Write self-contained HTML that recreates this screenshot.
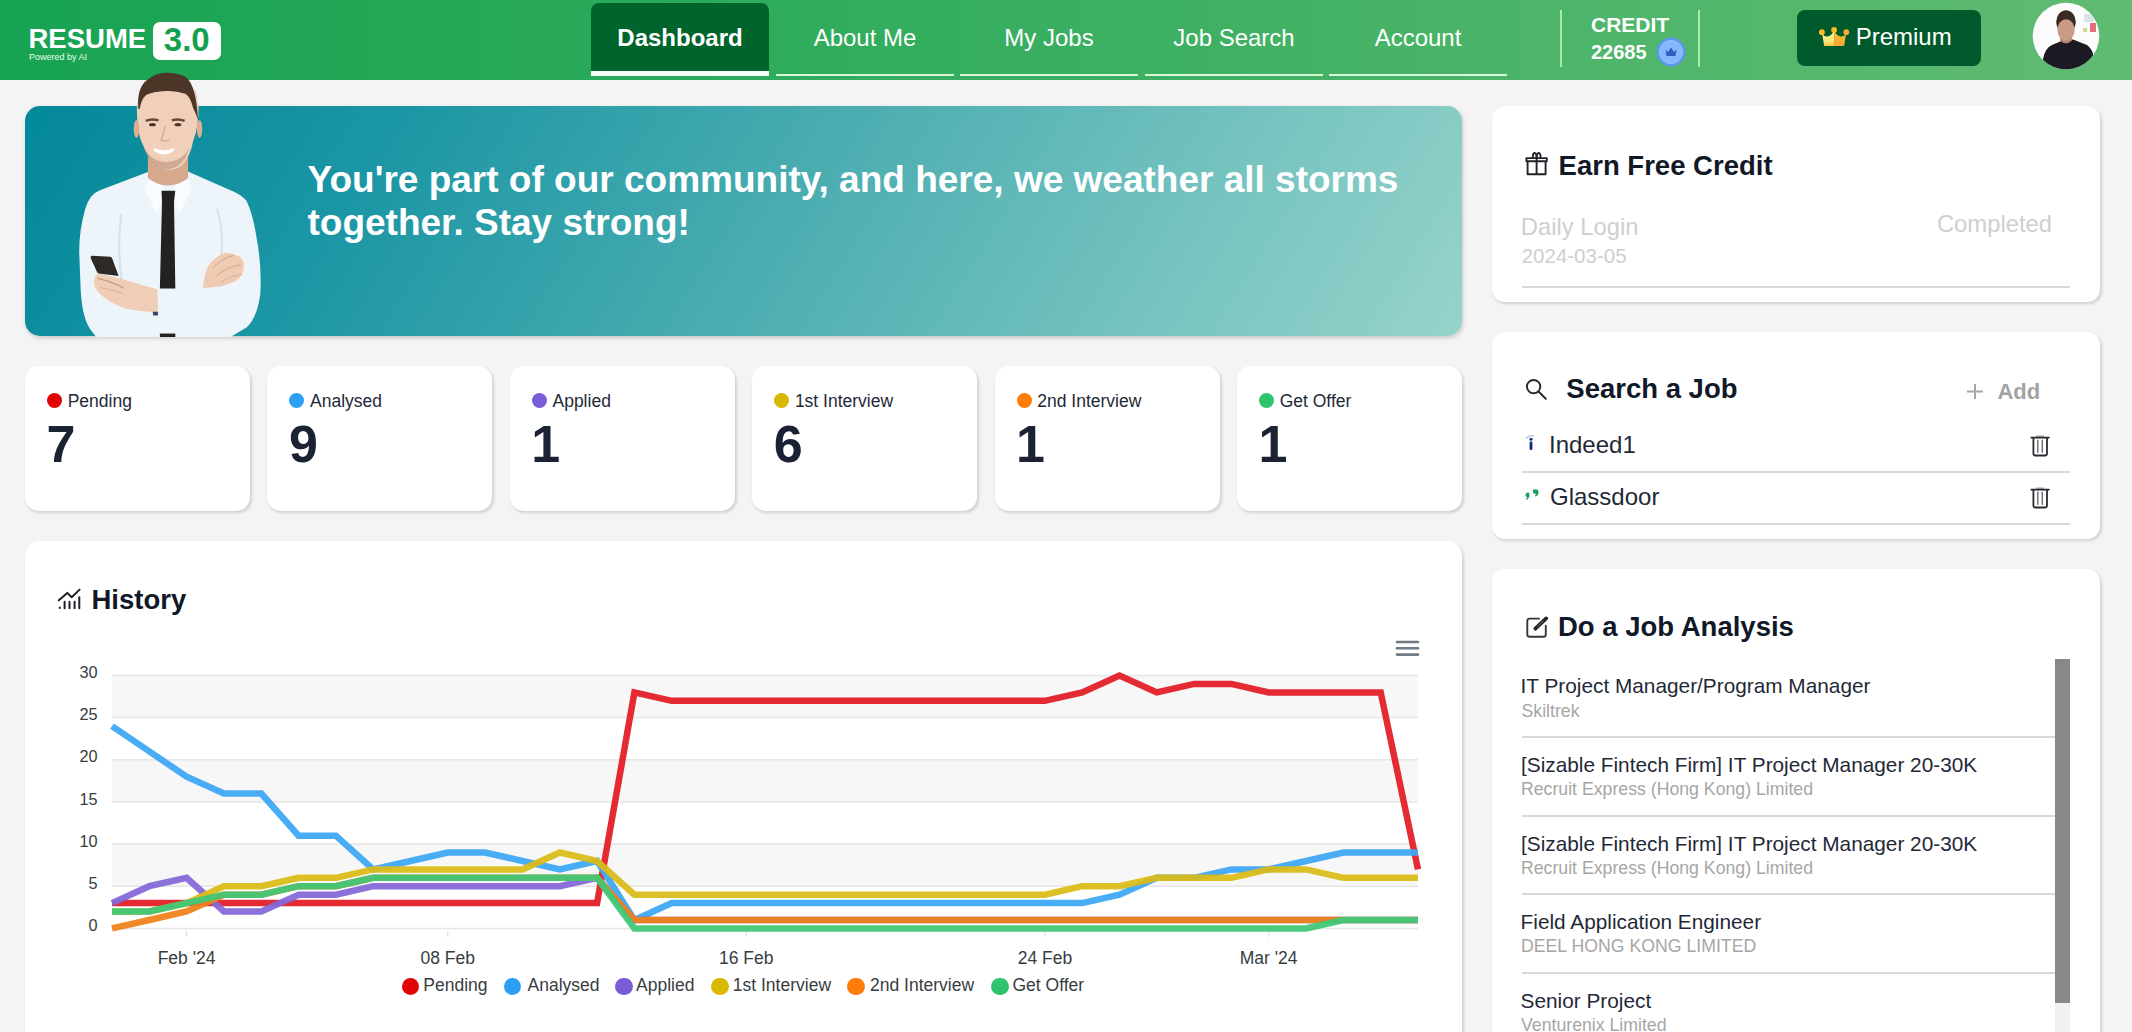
<!DOCTYPE html>
<html><head><meta charset="utf-8">
<style>
*{margin:0;padding:0;box-sizing:border-box}
html,body{width:2132px;height:1032px;overflow:hidden}
body{position:relative;background:#f4f4f4;font-family:"Liberation Sans",sans-serif;color:#1f2937}
.a{position:absolute;white-space:nowrap;line-height:1}
#hdr{position:absolute;left:0;top:0;width:2132px;height:80px;background:linear-gradient(90deg,#17a352 0%,#2eab5c 35%,#4ab468 70%,#60bb72 100%)}
.tab{position:absolute;top:3px;width:178px;height:71px;color:#fff;font-size:24px;text-align:center}
.tab span{position:absolute;left:0;right:0;top:25.7px;line-height:1}
.uline{position:absolute;top:74px;width:178px;height:2px;background:#d8f6d8}
.card{position:absolute;background:#fff;border-radius:15px;box-shadow:1.5px 2px 3px rgba(0,0,0,.14)}
.scard{top:366px;width:225px;height:145px;border-radius:14px}
.dot{position:absolute;width:15px;height:15px;border-radius:50%;left:22px;top:26.6px}
.slab{position:absolute;left:42.7px;top:27px;font-size:17.5px;line-height:1;color:#1f2937;white-space:nowrap}
.snum{position:absolute;left:21.5px;top:52px;font-size:52px;font-weight:bold;line-height:1;color:#1a2233}
.ttl{font-size:27.5px;font-weight:bold;color:#111827}
.jt{font-size:20.8px;color:#1f2937;margin-top:0.8px}
.js{font-size:17.7px;color:#a6a6a6;margin-top:1.2px}
.sep{position:absolute;height:2px;background:#d9d9d9}
svg.chart{position:absolute;left:0;top:0;font-family:"Liberation Sans",sans-serif}
</style></head><body>
<div id="hdr"></div>
<div class="a" style="left:28.5px;top:25.4px;font-size:27.5px;font-weight:bold;color:#fff">RESUME</div>
<div class="a" style="left:29px;top:52.6px;font-size:9px;color:#e8ffe8">Powered by AI</div>
<div class="a" style="left:153px;top:22px;width:67.5px;height:38px;background:#fff;border-radius:7px"></div>
<div class="a" style="left:163.8px;top:23.3px;font-size:33px;font-weight:bold;color:#13a04e">3.0</div>

<div class="tab" style="left:591px;background:#00652d;border-radius:8px 8px 0 0;height:68px"><span style="font-weight:bold;top:22.7px">Dashboard</span></div>
<div class="a" style="left:591px;top:71px;width:178px;height:5px;background:#f5fff5"></div>
<div class="tab" style="left:776px"><span style="top:22.7px">About Me</span></div>
<div class="uline" style="left:776px"></div>
<div class="tab" style="left:960px"><span style="top:22.7px">My Jobs</span></div>
<div class="uline" style="left:960px"></div>
<div class="tab" style="left:1145px"><span style="top:22.7px">Job Search</span></div>
<div class="uline" style="left:1145px"></div>
<div class="tab" style="left:1329px"><span style="top:22.7px">Account</span></div>
<div class="uline" style="left:1329px"></div>

<div class="a" style="left:1560px;top:10px;width:2px;height:57px;background:#a8eca8"></div>
<div class="a" style="left:1697.5px;top:10px;width:2px;height:57px;background:#a8eca8"></div>
<div class="a" style="left:1591px;top:13.9px;font-size:21px;font-weight:bold;color:#fff">CREDIT</div>
<div class="a" style="left:1591px;top:41.6px;font-size:20px;font-weight:bold;color:#fff">22685</div>
<svg class="a" style="left:1656px;top:37px" width="30" height="30" viewBox="0 0 30 30">
<circle cx="15" cy="15" r="14.5" fill="#5a98f2"/><circle cx="15" cy="15" r="11.5" fill="#86b6fb" stroke="#9cc4ff" stroke-width="1"/>
<path d="M9.5 12.5 L12 15 L15 10.5 L18 15 L20.5 12.5 L19.5 19 L10.5 19 Z" fill="#2d5fc0"/>
</svg>

<div class="a" style="left:1797px;top:10px;width:184px;height:56px;background:#005a2b;border-radius:8px"></div>
<svg class="a" style="left:1818px;top:27px" width="32" height="21" viewBox="0 0 32 21">
<defs><linearGradient id="cr" x1="0" y1="0" x2="0" y2="1"><stop offset="0" stop-color="#fbc02d"/><stop offset="1" stop-color="#f9a63a"/></linearGradient>
<linearGradient id="cl" x1="0" y1="0" x2="0" y2="1"><stop offset="0" stop-color="#f6f59a"/><stop offset=".7" stop-color="#fde377"/><stop offset="1" stop-color="#f9c23c"/></linearGradient></defs>
<circle cx="3.9" cy="5.2" r="2.9" fill="#fbbf24"/><circle cx="16.1" cy="3" r="2.9" fill="#fbb92a"/><circle cx="28.3" cy="5.2" r="2.9" fill="#f9a83a"/>
<path d="M4.2 7.2 Q7 10 10 9.4 Q13.5 8.6 16.1 4.6 L16.1 19 L6.2 19 Z" fill="url(#cl)"/>
<path d="M16.1 4.6 Q18.7 8.6 22.2 9.4 Q25.2 10 28 7.2 L26.1 19 L16.1 19 Z" fill="url(#cr)"/>
</svg>
<div class="a" style="left:1855.7px;top:25.1px;font-size:24px;color:#fff">Premium</div>

<svg class="a" style="left:2032px;top:2px" width="68" height="68" viewBox="0 0 68 68">
<defs><clipPath id="av"><circle cx="34" cy="34" r="33.3"/></clipPath></defs>
<g clip-path="url(#av)">
<rect width="68" height="68" fill="#fcfcfc"/>
<rect x="52" y="12" width="10" height="8" fill="#dde3e6"/>
<rect x="58" y="21" width="6" height="9" fill="#e2707a"/>
<rect x="51" y="26" width="4" height="4" fill="#cfe08a"/>
<path d="M8 68 L11 57 Q13 46 20 43 L30 38.7 L41 37.5 L55 43 Q60 47 61 52 L62 68 Z" fill="#1b1a22"/>
<path d="M28.5 32 L39.5 32 L40 38.5 Q34 44 28 38.5 Z" fill="#b58873"/>
<ellipse cx="34" cy="20" rx="9.8" ry="11.5" fill="#3b2a22"/>
<ellipse cx="34" cy="28" rx="8.6" ry="10.8" fill="#c99a84"/>
<path d="M25 21 Q25 9 34 8.5 Q43 9 43 21 Q41 16 34 16 Q27 16 25 21 Z" fill="#3b2a22"/>
</g></svg>
<div class="a" style="left:25px;top:106px;width:1437px;height:230px;border-radius:15px;background:linear-gradient(122deg,#03889b 0%,#1b96a4 24%,#4daeb1 54%,#77c4c0 80%,#96d3ca 100%);box-shadow:1px 2px 4px rgba(0,0,0,.18)"></div>
<svg class="a" style="left:60px;top:65px" width="220" height="272" viewBox="0 0 826 1021" preserveAspectRatio="none">
<path d="M335 400 L150 470 Q110 485 95 540 Q72 620 72 700 L78 850 Q85 960 120 1000 L136 1021 L640 1021 L700 985 Q740 950 752 860 Q758 760 740 660 Q725 560 700 510 Q680 485 640 470 L480 400 Z" fill="#eef5fa"/>
<path d="M340 405 L318 470 L365 560 L392 470 Z" fill="#f9fcff"/>
<path d="M478 405 L495 470 L445 560 L420 470 Z" fill="#f9fcff"/>
<path d="M230 560 Q210 700 240 860" stroke="#d6e2ec" stroke-width="8" fill="none"/>
<path d="M590 540 Q620 640 600 760" stroke="#d6e2ec" stroke-width="8" fill="none"/>
<path d="M330 344 L330 425 Q405 480 481 425 L481 344 Z" fill="#d7a98c"/>
<path d="M381 472 L433 472 L428 513 L433 839 L375 839 L383 513 Z" fill="#222"/>
<path d="M375 1008 L433 1008 L433 1021 L375 1021 Z" fill="#222"/>
<path d="M300 95 L289 150 Q287 250 309 295 Q340 375 387 393 Q430 400 461 374 Q490 340 500 285 Q522 230 520 150 L510 95 Z" fill="#f1d0bb"/>
<ellipse cx="287" cy="240" rx="10" ry="34" fill="#dfae90"/>
<ellipse cx="524" cy="240" rx="10" ry="34" fill="#dfae90"/>
<path d="M312 300 Q330 370 387 393 Q440 395 470 350 Q485 320 492 295 Q470 360 400 365 Q335 360 312 300 Z" fill="#b58a72" opacity=".55"/>
<path d="M348 312 Q390 328 432 312 Q425 334 390 336 Q356 334 348 312 Z" fill="#fff"/>
<path d="M322 210 Q345 200 370 208" stroke="#6a4634" stroke-width="9" fill="none"/>
<path d="M420 208 Q445 200 468 210" stroke="#6a4634" stroke-width="9" fill="none"/>
<ellipse cx="347" cy="224" rx="13" ry="6" fill="#4a3428"/>
<ellipse cx="443" cy="224" rx="13" ry="6" fill="#4a3428"/>
<path d="M395 230 Q385 270 380 282 Q395 290 412 282" stroke="#d9a68a" stroke-width="5" fill="none"/>
<path d="M294 165 Q288 90 323 59 Q360 28 397 29 Q445 30 471 44 Q512 75 518 206 Q510 180 500 162 Q490 120 471 108 Q430 95 397 98 Q350 100 323 113 Q305 130 299 165 Z" fill="#4d3527"/>
<path d="M127 815 Q128 785 150 783 L240 805 Q320 830 366 842 L368 928 Q300 925 243 914 Q180 890 150 860 Q128 840 127 815 Z" fill="#efcdb6"/>
<path d="M140 800 Q200 815 240 838" stroke="#c99a80" stroke-width="4" fill="none"/>
<path d="M150 835 Q200 845 240 858" stroke="#d5ab92" stroke-width="3" fill="none"/>
<path d="M348 926 L368 926 L368 940 L350 940 Z" fill="#3b4c6a"/>
<path d="M121 716 L189 720 Q194 721 196 726 L220 792 L146 783 Q141 782 139 777 L115 724 Q114 716 121 716 Z" fill="#2e2826"/>
<path d="M537 837 Q540 780 561 747 Q590 715 621 705 Q650 705 675 720 Q692 735 690 753 Q690 775 684 786 Q670 805 657 813 Q630 825 603 831 Z" fill="#efcbb3"/>
<path d="M575 760 Q610 725 650 715" stroke="#cf9f86" stroke-width="3.5" fill="none"/>
<path d="M590 790 Q630 755 680 750" stroke="#cf9f86" stroke-width="3.5" fill="none"/>
<path d="M605 815 Q640 790 682 785" stroke="#d5a890" stroke-width="3" fill="none"/>
</svg>
<div class="a" style="left:307.5px;top:160.9px;font-size:37px;font-weight:bold;color:#fff">You're part of our community, and here, we weather all storms</div>
<div class="a" style="left:307.5px;top:203.8px;font-size:37px;font-weight:bold;color:#fff">together. Stay strong!</div>

<div class="card scard" style="left:25px"><div class="dot" style="background:#e00404"></div><div class="slab">Pending</div><div class="snum">7</div></div>
<div class="card scard" style="left:267.4px"><div class="dot" style="background:#2c9ff5"></div><div class="slab">Analysed</div><div class="snum">9</div></div>
<div class="card scard" style="left:509.8px"><div class="dot" style="background:#7a5dd6"></div><div class="slab">Applied</div><div class="snum">1</div></div>
<div class="card scard" style="left:752.2px"><div class="dot" style="background:#d8b800"></div><div class="slab">1st Interview</div><div class="snum">6</div></div>
<div class="card scard" style="left:994.6px"><div class="dot" style="background:#ff7c0a"></div><div class="slab">2nd Interview</div><div class="snum">1</div></div>
<div class="card scard" style="left:1237px"><div class="dot" style="background:#2ec46e"></div><div class="slab">Get Offer</div><div class="snum">1</div></div>
<div class="card" style="left:25px;top:541px;width:1437px;height:520px"></div>
<svg class="a" style="left:57px;top:587px" width="25" height="23" viewBox="0 0 25 23" fill="none" stroke="#1f1f26" stroke-width="2" stroke-linecap="round" stroke-linejoin="round">
<path d="M1.8 13.3 L10.3 5.9 L14.7 10.3 L22.6 2.6"/>
<path d="M2.8 20.6 L2.8 20.9"/><path d="M7.6 14.8 L7.6 21.2"/><path d="M12.5 14.8 L12.5 21.2"/><path d="M17.6 14.8 L17.6 21.2"/><path d="M22.3 10.2 L22.3 21.2"/>
</svg>
<div class="a ttl" style="left:91.5px;top:585.7px">History</div>
<svg class="a" style="left:1394px;top:639px" width="26" height="18" viewBox="0 0 26 18" stroke="#6e7b87" stroke-width="2.6" stroke-linecap="round">
<path d="M3 3 L24 3"/><path d="M3 9.2 L24 9.2"/><path d="M3 15.6 L24 15.6"/>
</svg>
<svg class="chart" width="2132" height="1032" viewBox="0 0 2132 1032">
<rect x="112.0" y="675.5" width="1306.0" height="42.1" fill="#f7f7f7"/>
<rect x="112.0" y="759.8" width="1306.0" height="42.2" fill="#f7f7f7"/>
<rect x="112.0" y="844.1" width="1306.0" height="42.1" fill="#f7f7f7"/>
<line x1="112.0" y1="928.4" x2="1418" y2="928.4" stroke="#e6e6e6" stroke-width="1.5"/>
<line x1="112.0" y1="886.2" x2="1418" y2="886.2" stroke="#e6e6e6" stroke-width="1.5"/>
<line x1="112.0" y1="844.1" x2="1418" y2="844.1" stroke="#e6e6e6" stroke-width="1.5"/>
<line x1="112.0" y1="802.0" x2="1418" y2="802.0" stroke="#e6e6e6" stroke-width="1.5"/>
<line x1="112.0" y1="759.8" x2="1418" y2="759.8" stroke="#e6e6e6" stroke-width="1.5"/>
<line x1="112.0" y1="717.6" x2="1418" y2="717.6" stroke="#e6e6e6" stroke-width="1.5"/>
<line x1="112.0" y1="675.5" x2="1418" y2="675.5" stroke="#e6e6e6" stroke-width="1.5"/>
<text x="97.5" y="931.0" text-anchor="end" font-size="16.3" fill="#373d3f">0</text>
<text x="97.5" y="888.9" text-anchor="end" font-size="16.3" fill="#373d3f">5</text>
<text x="97.5" y="846.7" text-anchor="end" font-size="16.3" fill="#373d3f">10</text>
<text x="97.5" y="804.6" text-anchor="end" font-size="16.3" fill="#373d3f">15</text>
<text x="97.5" y="762.4" text-anchor="end" font-size="16.3" fill="#373d3f">20</text>
<text x="97.5" y="720.2" text-anchor="end" font-size="16.3" fill="#373d3f">25</text>
<text x="97.5" y="678.1" text-anchor="end" font-size="16.3" fill="#373d3f">30</text>
<line x1="186.6" y1="931" x2="186.6" y2="937" stroke="#d8d8d8" stroke-width="1"/>
<text x="186.6" y="963.6" text-anchor="middle" font-size="17.5" fill="#373d3f">Feb '24</text>
<line x1="447.8" y1="931" x2="447.8" y2="937" stroke="#d8d8d8" stroke-width="1"/>
<text x="447.8" y="963.6" text-anchor="middle" font-size="17.5" fill="#373d3f">08 Feb</text>
<line x1="746.3" y1="931" x2="746.3" y2="937" stroke="#d8d8d8" stroke-width="1"/>
<text x="746.3" y="963.6" text-anchor="middle" font-size="17.5" fill="#373d3f">16 Feb</text>
<line x1="1044.9" y1="931" x2="1044.9" y2="937" stroke="#d8d8d8" stroke-width="1"/>
<text x="1044.9" y="963.6" text-anchor="middle" font-size="17.5" fill="#373d3f">24 Feb</text>
<line x1="1268.7" y1="931" x2="1268.7" y2="937" stroke="#d8d8d8" stroke-width="1"/>
<text x="1268.7" y="963.6" text-anchor="middle" font-size="17.5" fill="#373d3f">Mar '24</text>
<path d="M112.0,903.1 L149.3,903.1 L186.6,903.1 L223.9,903.1 L261.3,903.1 L298.6,903.1 L335.9,903.1 L373.2,903.1 L410.5,903.1 L447.8,903.1 L485.1,903.1 L522.5,903.1 L559.8,903.1 L597.1,903.1 L634.4,692.4 L671.7,700.8 L709.0,700.8 L746.3,700.8 L783.7,700.8 L821.0,700.8 L858.3,700.8 L895.6,700.8 L932.9,700.8 L970.2,700.8 L1007.5,700.8 L1044.9,700.8 L1082.2,692.4 L1119.5,675.5 L1156.8,692.4 L1194.1,683.9 L1231.4,683.9 L1268.7,692.4 L1306.1,692.4 L1343.4,692.4 L1380.7,692.4 L1418.0,869.4" fill="none" stroke="#e21e26" stroke-width="6.5" stroke-opacity="0.94" stroke-linejoin="miter" stroke-linecap="butt"/>
<path d="M112.0,726.1 L149.3,751.4 L186.6,776.7 L223.9,793.5 L261.3,793.5 L298.6,835.7 L335.9,835.7 L373.2,869.4 L410.5,861.0 L447.8,852.5 L485.1,852.5 L522.5,861.0 L559.8,869.4 L597.1,861.0 L634.4,920.0 L671.7,903.1 L709.0,903.1 L746.3,903.1 L783.7,903.1 L821.0,903.1 L858.3,903.1 L895.6,903.1 L932.9,903.1 L970.2,903.1 L1007.5,903.1 L1044.9,903.1 L1082.2,903.1 L1119.5,894.7 L1156.8,877.8 L1194.1,877.8 L1231.4,869.4 L1268.7,869.4 L1306.1,861.0 L1343.4,852.5 L1380.7,852.5 L1418.0,852.5" fill="none" stroke="#3ea8f5" stroke-width="6.5" stroke-opacity="0.94" stroke-linejoin="miter" stroke-linecap="butt"/>
<path d="M112.0,903.1 L149.3,886.2 L186.6,877.8 L223.9,911.5 L261.3,911.5 L298.6,894.7 L335.9,894.7 L373.2,886.2 L410.5,886.2 L447.8,886.2 L485.1,886.2 L522.5,886.2 L559.8,886.2 L597.1,877.8 L634.4,920.0 L671.7,920.0 L709.0,920.0 L746.3,920.0 L783.7,920.0 L821.0,920.0 L858.3,920.0 L895.6,920.0 L932.9,920.0 L970.2,920.0 L1007.5,920.0 L1044.9,920.0 L1082.2,920.0 L1119.5,920.0 L1156.8,920.0 L1194.1,920.0 L1231.4,920.0 L1268.7,920.0 L1306.1,920.0 L1343.4,920.0 L1380.7,920.0 L1418.0,920.0" fill="none" stroke="#8568d8" stroke-width="6.5" stroke-opacity="0.94" stroke-linejoin="miter" stroke-linecap="butt"/>
<path d="M112.0,911.5 L149.3,911.5 L186.6,903.1 L223.9,886.2 L261.3,886.2 L298.6,877.8 L335.9,877.8 L373.2,869.4 L410.5,869.4 L447.8,869.4 L485.1,869.4 L522.5,869.4 L559.8,852.5 L597.1,861.0 L634.4,894.7 L671.7,894.7 L709.0,894.7 L746.3,894.7 L783.7,894.7 L821.0,894.7 L858.3,894.7 L895.6,894.7 L932.9,894.7 L970.2,894.7 L1007.5,894.7 L1044.9,894.7 L1082.2,886.2 L1119.5,886.2 L1156.8,877.8 L1194.1,877.8 L1231.4,877.8 L1268.7,869.4 L1306.1,869.4 L1343.4,877.8 L1380.7,877.8 L1418.0,877.8" fill="none" stroke="#dbbb18" stroke-width="6.5" stroke-opacity="0.94" stroke-linejoin="miter" stroke-linecap="butt"/>
<path d="M112.0,928.4 L149.3,920.0 L186.6,911.5 L223.9,894.7 L261.3,894.7 L298.6,886.2 L335.9,886.2 L373.2,877.8 L410.5,877.8 L447.8,877.8 L485.1,877.8 L522.5,877.8 L559.8,877.8 L597.1,877.8 L634.4,920.0 L671.7,920.0 L709.0,920.0 L746.3,920.0 L783.7,920.0 L821.0,920.0 L858.3,920.0 L895.6,920.0 L932.9,920.0 L970.2,920.0 L1007.5,920.0 L1044.9,920.0 L1082.2,920.0 L1119.5,920.0 L1156.8,920.0 L1194.1,920.0 L1231.4,920.0 L1268.7,920.0 L1306.1,920.0 L1343.4,920.0 L1380.7,920.0 L1418.0,920.0" fill="none" stroke="#ef8219" stroke-width="6.5" stroke-opacity="0.94" stroke-linejoin="miter" stroke-linecap="butt"/>
<path d="M112.0,911.5 L149.3,911.5 L186.6,903.1 L223.9,894.7 L261.3,894.7 L298.6,886.2 L335.9,886.2 L373.2,877.8 L410.5,877.8 L447.8,877.8 L485.1,877.8 L522.5,877.8 L559.8,877.8 L597.1,877.8 L634.4,928.4 L671.7,928.4 L709.0,928.4 L746.3,928.4 L783.7,928.4 L821.0,928.4 L858.3,928.4 L895.6,928.4 L932.9,928.4 L970.2,928.4 L1007.5,928.4 L1044.9,928.4 L1082.2,928.4 L1119.5,928.4 L1156.8,928.4 L1194.1,928.4 L1231.4,928.4 L1268.7,928.4 L1306.1,928.4 L1343.4,920.0 L1380.7,920.0 L1418.0,920.0" fill="none" stroke="#40c778" stroke-width="6.5" stroke-opacity="0.94" stroke-linejoin="miter" stroke-linecap="butt"/>
</svg>
<div class="a" style="left:0;top:0"></div>

<!-- legend -->
<div class="a" style="left:401.5px;top:977.5px;width:17.5px;height:17.5px;border-radius:50%;background:#e00404"></div>
<div class="a" style="left:423.3px;top:976.7px;font-size:17.5px;color:#373d3f">Pending</div>
<div class="a" style="left:503.7px;top:977.5px;width:17.5px;height:17.5px;border-radius:50%;background:#2c9ff5"></div>
<div class="a" style="left:527.6px;top:976.7px;font-size:17.5px;color:#373d3f">Analysed</div>
<div class="a" style="left:615px;top:977.5px;width:17.5px;height:17.5px;border-radius:50%;background:#7a5dd6"></div>
<div class="a" style="left:636.1px;top:976.7px;font-size:17.5px;color:#373d3f">Applied</div>
<div class="a" style="left:711.3px;top:977.5px;width:17.5px;height:17.5px;border-radius:50%;background:#d8b800"></div>
<div class="a" style="left:732.8px;top:976.7px;font-size:17.5px;color:#373d3f">1st Interview</div>
<div class="a" style="left:847.3px;top:977.5px;width:17.5px;height:17.5px;border-radius:50%;background:#ff7c0a"></div>
<div class="a" style="left:870.0px;top:976.7px;font-size:17.5px;color:#373d3f">2nd Interview</div>
<div class="a" style="left:991.2px;top:977.5px;width:17.5px;height:17.5px;border-radius:50%;background:#2ec46e"></div>
<div class="a" style="left:1012.5px;top:976.7px;font-size:17.5px;color:#373d3f">Get Offer</div>

<!-- right column card 1 -->
<div class="card" style="left:1492px;top:106px;width:608px;height:196px;border-radius:13px"></div>
<svg class="a" style="left:1524px;top:151px" width="25" height="26" viewBox="0 0 25 26" fill="none" stroke="#22222a" stroke-width="1.9" stroke-linejoin="round">
<rect x="2.4" y="7.1" width="20.4" height="3.2"/><path d="M3.6 10.3 L3.6 23.2 L21.6 23.2 L21.6 10.3"/><path d="M12.6 7.1 L12.6 23.2"/>
<path d="M8.8 7.1 Q8.6 2 10.6 2 Q12.6 2 12.6 7.1"/><path d="M12.6 7.1 Q12.6 2 14.7 2 Q16.7 2 16.6 7.1"/>
</svg>
<div class="a ttl" style="left:1558.6px;top:151.5px">Earn Free Credit</div>
<div class="a" style="left:1520.8px;top:215.4px;font-size:23.8px;color:#cfcfcf">Daily Login</div>
<div class="a" style="left:1521.7px;top:245.9px;font-size:20.5px;color:#cfcfcf">2024-03-05</div>
<div class="a" style="right:80px;top:212.3px;font-size:23.8px;color:#cfcfcf">Completed</div>
<div class="sep" style="left:1522px;top:285.5px;width:548px"></div>

<!-- card 2 -->
<div class="card" style="left:1492px;top:332px;width:608px;height:207px;border-radius:13px"></div>
<svg class="a" style="left:1524px;top:377px" width="25" height="25" viewBox="0 0 25 25" fill="none" stroke="#2b2b33" stroke-width="2" stroke-linecap="round">
<circle cx="9.6" cy="9.6" r="6.7"/><path d="M14.5 14.5 L21.8 21.8"/>
</svg>
<div class="a ttl" style="left:1566.3px;top:374.9px">Search a Job</div>
<svg class="a" style="left:1966px;top:383px" width="18" height="17" viewBox="0 0 18 17" stroke="#a8a8a8" stroke-width="2">
<path d="M1 8.5 L17 8.5"/><path d="M9 1 L9 16"/>
</svg>
<div class="a" style="left:1997.4px;top:381.2px;font-size:22px;font-weight:bold;color:#a3a3a3">Add</div>
<svg class="a" style="left:1524px;top:434px" width="13" height="18" viewBox="0 0 13 18">
<path d="M2 4.5 Q5.5 0.8 10 1.8" stroke="#b9c3d8" stroke-width="1.3" fill="none"/>
<circle cx="7" cy="5.3" r="1.5" fill="#0d2a8a"/><rect x="5.6" y="7.6" width="2.8" height="8.4" rx="1.2" fill="#0d2a8a"/>
</svg>
<div class="a" style="left:1549px;top:432.7px;font-size:24px;color:#1f2937">Indeed1</div>
<svg class="a" style="left:2030px;top:435px" width="20" height="22" viewBox="0 0 20 22" fill="none" stroke-linecap="round" stroke-linejoin="round">
<path d="M6.5 1.1 L13.5 1.1" stroke="#9a9a9a" stroke-width="1.1"/>
<path d="M1.4 2.6 L18.8 2.6" stroke="#24242a" stroke-width="1.9"/>
<path d="M3.4 2.8 L3.4 18.6 Q3.4 20.5 5.3 20.5 L15.1 20.5 Q17 20.5 17 18.6 L17 2.8" stroke="#2c2a30" stroke-width="1.8"/>
<path d="M7.8 5.2 L7.8 17.2" stroke="#6e6a70" stroke-width="1.4"/><path d="M12.3 5.2 L12.3 17.2" stroke="#6e6a70" stroke-width="1.4"/>
</svg>
<div class="sep" style="left:1522px;top:471px;width:548px"></div>
<svg class="a" style="left:1524px;top:487px" width="16" height="14" viewBox="0 0 16 14" fill="#139e62">
<path d="M1.5 8.5 Q1.5 5.5 4 5.5 Q5.5 5.5 5.5 7.5 Q5.5 11 2.5 13 L2 12 Q3.5 10.5 3.5 10 Q1.5 10 1.5 8.5 Z"/>
<path d="M9 2.5 L12.5 2.5 Q14.5 2.5 14.5 5.5 Q14.5 9 11 9.5 L11 8.2 Q12.5 7.5 12.5 7 Q9 7 9 4.5 Z"/>
</svg>
<div class="a" style="left:1550px;top:484.7px;font-size:24px;color:#1f2937">Glassdoor</div>
<svg class="a" style="left:2030px;top:487px" width="20" height="22" viewBox="0 0 20 22" fill="none" stroke-linecap="round" stroke-linejoin="round">
<path d="M6.5 1.1 L13.5 1.1" stroke="#9a9a9a" stroke-width="1.1"/>
<path d="M1.4 2.6 L18.8 2.6" stroke="#24242a" stroke-width="1.9"/>
<path d="M3.4 2.8 L3.4 18.6 Q3.4 20.5 5.3 20.5 L15.1 20.5 Q17 20.5 17 18.6 L17 2.8" stroke="#2c2a30" stroke-width="1.8"/>
<path d="M7.8 5.2 L7.8 17.2" stroke="#6e6a70" stroke-width="1.4"/><path d="M12.3 5.2 L12.3 17.2" stroke="#6e6a70" stroke-width="1.4"/>
</svg>
<div class="sep" style="left:1522px;top:523px;width:548px"></div>

<!-- card 3 -->
<div class="card" style="left:1492px;top:569px;width:608px;height:520px;border-radius:13px"></div>
<svg class="a" style="left:1524px;top:614px" width="27" height="26" viewBox="0 0 27 26" fill="none" stroke-linecap="round" stroke-linejoin="round">
<path d="M15 4.6 L5.6 4.6 Q3.3 4.6 3.3 6.9 L3.3 20.4 Q3.3 22.7 5.6 22.7 L19.5 22.7 Q21.8 22.7 21.8 20.4 L21.8 11.6" stroke="#3a3436" stroke-width="1.9"/>
<path d="M11.4 14.7 L22.2 4.4" stroke="#24242c" stroke-width="3.8"/>
<path d="M13.5 12.7 L20 6.5" stroke="#8a8f95" stroke-width="0.9" stroke-dasharray="1 1.3"/>
</svg>
<div class="a ttl" style="left:1558px;top:613.2px">Do a Job Analysis</div>
<div class="a jt" style="left:1520.6px;top:675.7px">IT Project Manager/Program Manager</div>
<div class="a js" style="left:1521.5px;top:701.8px">Skiltrek</div>
<div class="sep" style="left:1522px;top:736px;width:533px"></div>
<div class="a jt" style="left:1521px;top:754.3px">[Sizable Fintech Firm] IT Project Manager 20-30K</div>
<div class="a js" style="left:1521px;top:780.1px">Recruit Express (Hong Kong) Limited</div>
<div class="sep" style="left:1522px;top:814.5px;width:533px"></div>
<div class="a jt" style="left:1521px;top:833.2px">[Sizable Fintech Firm] IT Project Manager 20-30K</div>
<div class="a js" style="left:1521px;top:858.8px">Recruit Express (Hong Kong) Limited</div>
<div class="sep" style="left:1522px;top:893px;width:533px"></div>
<div class="a jt" style="left:1520.6px;top:911.5px">Field Application Engineer</div>
<div class="a js" style="left:1521px;top:937.1px">DEEL HONG KONG LIMITED</div>
<div class="sep" style="left:1522px;top:972px;width:533px"></div>
<div class="a jt" style="left:1520.6px;top:990.5px">Senior Project</div>
<div class="a js" style="left:1521px;top:1016.3px">Venturenix Limited</div>
<div class="a" style="left:2055px;top:659px;width:14.5px;height:373px;background:#f1f1f1"></div>
<div class="a" style="left:2055px;top:659px;width:14.5px;height:344px;background:#888"></div>
</body></html>
